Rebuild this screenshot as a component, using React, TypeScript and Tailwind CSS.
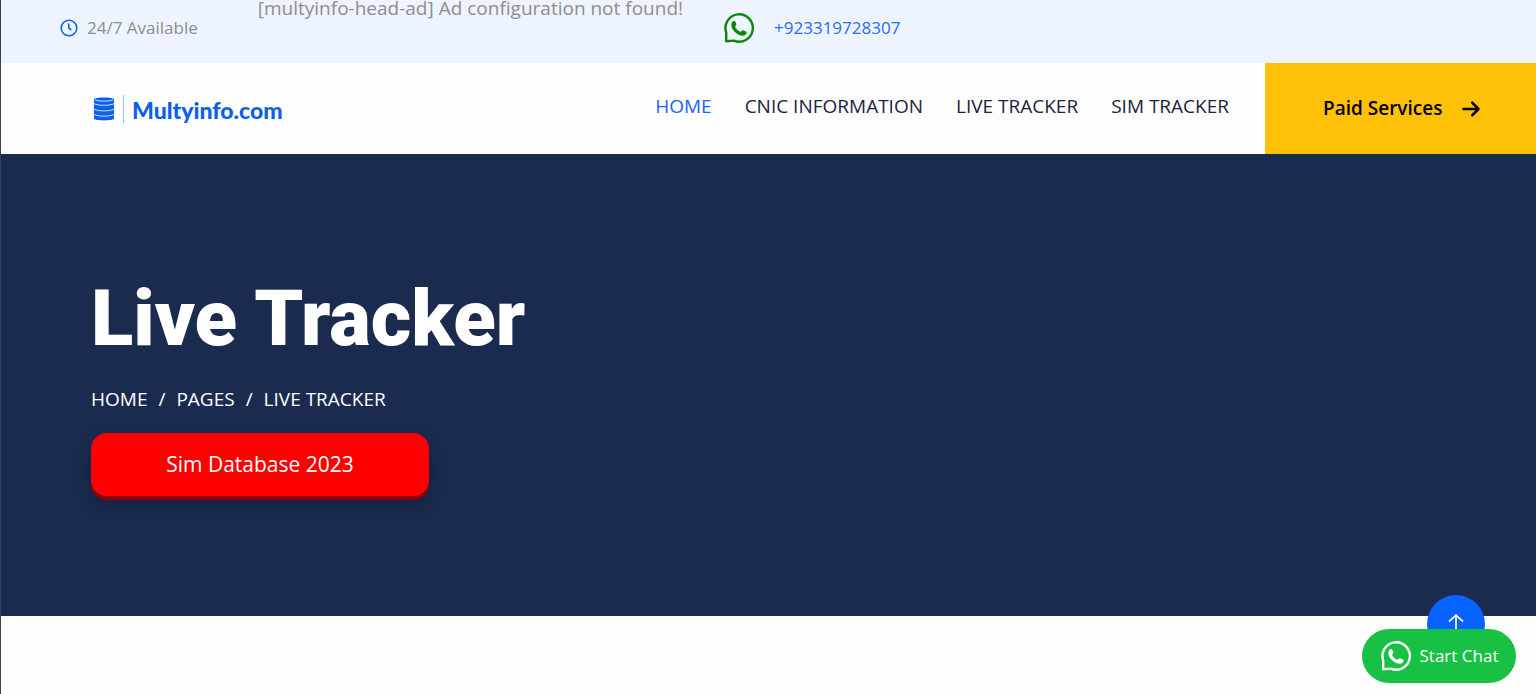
import { FaArrowRight } from "react-icons/fa6";

const navLinks = [
  { label: "HOME", href: "#home", active: true },
  { label: "CNIC INFORMATION", href: "#cnic" },
  { label: "LIVE TRACKER", href: "#live" },
  { label: "SIM TRACKER", href: "#sim" },
];

function WhatsAppIcon({ className }: { className: string }) {
  return (
    <svg className={className} viewBox="0 0 32 32" fill="none" aria-hidden="true">
      <path
        d="M3.2 20.5A13.7 13.7 0 1 1 10.8 28.6L3.2 29.2Z"
        stroke="currentColor"
        strokeWidth="2.4"
        strokeLinejoin="round"
      />
      <path
        d="M9 10.5C9.6 9.4 10.6 8.8 11.6 9.1C12.4 9.4 13.4 12 13.3 12.8C13.2 13.5 12.1 14 12.2 14.8C12.6 16.6 15.4 19.2 17.4 19.8C18.3 20 18.8 18.5 19.7 18.3C20.6 18.2 23.3 19.5 23.6 20.2C24 21.4 22.4 23.5 20.2 23.7C14.5 24 8.4 17.8 8.3 13C8.3 12.1 8.5 11.2 9 10.5Z"
        fill="currentColor"
      />
    </svg>
  );
}

function DatabaseIcon() {
  return (
    <svg className="h-6 w-[22px]" viewBox="0 0 20 24" fill="none" aria-hidden="true">
      <path d="M0 2.4C0 -.1 20 -.1 20 2.4V21.6C20 24.1 0 24.1 0 21.6Z" fill="currentColor" />
      <path
        d="M1 2.8C5 4.6 15 4.6 19 2.8M0 6.6C4 8.9 16 8.9 20 6.6M0 12.2C4 14.5 16 14.5 20 12.2M0 17.4C4 19.7 16 19.7 20 17.4"
        stroke="#fff"
        strokeWidth=".8"
      />
    </svg>
  );
}

export default function App() {
  return (
    <div className="min-h-screen border-l border-gray-700 bg-[#fefefe] font-['Open_Sans',sans-serif]">
      {/* Top bar */}
      <div className="flex h-[63px] items-start bg-[#edf4ff] pl-[59px] text-[#8d8d8d]">
        <div className="flex h-14 items-center gap-[9px]">
          <svg className="size-4.5 text-[#0d5ffc]" viewBox="0 0 18 18" fill="none" stroke="currentColor" aria-hidden="true">
            <circle cx="9" cy="9" r="7.8" strokeWidth="1.6" />
            <path d="M8.8 4.5V9.2L11.3 11" strokeWidth="1.6" />
          </svg>
          <span className="text-[17px]">24/7 Available</span>
        </div>
        <p className="ml-15 text-[19px] leading-4">[multyinfo-head-ad] Ad configuration not found!</p>
        <a href="tel:+923319728307" className="ml-10 flex h-14 items-center gap-[19px] text-[17px] text-[#2b6bf3]">
          <WhatsAppIcon className="size-8 text-[#088808]" />
          +923319728307
        </a>
      </div>

      {/* Navbar */}
      <header className="flex h-[91px] items-stretch">
        <a href="#home" className="ml-[92px] flex items-center gap-2 text-[#0b5fe8]">
          <DatabaseIcon />
          <span className="h-7 w-px bg-[#9dbff5]" />
          <span className="pt-1 font-[Lato,sans-serif] text-[23px] font-black">Multyinfo.com</span>
        </a>
        <nav className="mr-9 ml-auto flex items-center gap-[33px] pb-1 text-[19px]">
          {navLinks.map((link) => (
            <a key={link.label} href={link.href} className={link.active ? "text-[#1b63fb]" : "text-[#1b2342]"}>
              {link.label}
            </a>
          ))}
        </nav>
        <a
          href="#paid"
          className="flex w-[271px] items-center gap-[19px] bg-[#ffc107] pl-[58px] text-[19px] font-semibold text-black"
        >
          Paid Services
          <FaArrowRight className="size-5" />
        </a>
      </header>

      {/* Hero */}
      <main className="flex h-[462px] flex-col items-start bg-[#1a2b4f] pt-[119px] pl-[90px] text-white">
        <h1 className="font-[Roboto,sans-serif] text-[78px] leading-[92px] font-black">Live Tracker</h1>
        <nav aria-label="Breadcrumb" className="mt-5 flex gap-[11px] text-[19px] leading-7">
          <a href="#home">HOME</a>
          <span>/</span>
          <a href="#pages">PAGES</a>
          <span>/</span>
          <span>LIVE TRACKER</span>
        </nav>
        <button
          type="button"
          className="mt-5 h-[63px] w-[338px] rounded-2xl bg-[red] text-[21px] shadow-[0_4px_0_#900008,0_8px_18px_rgba(0,0,0,0.25)]"
        >
          Sim Database 2023
        </button>
      </main>

      {/* Floating controls */}
      <a
        href="#top"
        aria-label="Back to top"
        className="fixed right-[51px] bottom-[41px] flex size-[58px] items-center justify-center rounded-full bg-[#0663ff] text-white"
      >
        <svg className="size-5" viewBox="0 0 20 20" fill="none" stroke="currentColor" strokeWidth="1.7" aria-hidden="true">
          <path d="M10 19V1.2M3 7.5L10 1.2L17 7.5" />
        </svg>
      </a>
      <button
        type="button"
        className="fixed right-5 bottom-[11px] flex h-[54px] w-[154px] items-center justify-center gap-2 rounded-full bg-[#18c044] text-[17px] text-white"
      >
        <WhatsAppIcon className="size-8" />
        Start Chat
      </button>
    </div>
  );
}
